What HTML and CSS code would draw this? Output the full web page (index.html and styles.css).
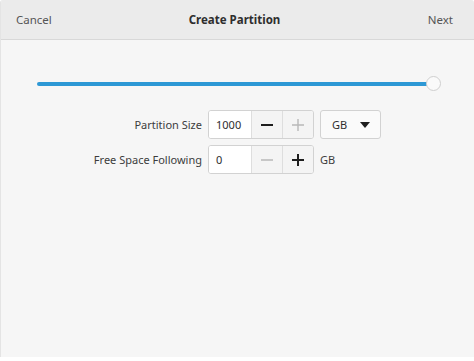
FILE: index.html
```html
<!DOCTYPE html>
<html lang="en">
<head>
    <meta charset="UTF-8">
    <title>Create Partition</title>
    <link rel="stylesheet" href="styles.css">
</head>
<body>
    <div class="window">
        <div class="header">
            <span class="header-btn">Cancel</span>
            <span class="title">Create Partition</span>
            <span class="header-btn next">Next</span>
        </div>

        <div class="content">
            <div class="slider">
                <div class="track"></div>
                <div class="thumb"></div>
            </div>

            <div class="form">
                <label>Partition Size</label>
                <div class="controls">
                    <div class="spin">
                        <div class="spin-value">1000</div>
                        <div class="spin-btn">
                            <svg width="14" height="14" viewBox="0 0 14 14"><path d="M1 7h12" stroke="#1e1e1e" stroke-width="2"/></svg>
                        </div>
                        <div class="spin-btn disabled">
                            <svg width="14" height="14" viewBox="0 0 14 14"><path d="M1 7h12M7 1v12" stroke="#b8b8b8" stroke-width="1.4"/></svg>
                        </div>
                    </div>
                    <div class="combo">
                        <span>GB</span>
                        <svg width="10" height="6" viewBox="0 0 10 6"><path d="M0 0h10L5 6z" fill="#1e1e1e"/></svg>
                    </div>
                </div>

                <label>Free Space Following</label>
                <div class="controls">
                    <div class="spin">
                        <div class="spin-value">0</div>
                        <div class="spin-btn disabled">
                            <svg width="14" height="14" viewBox="0 0 14 14"><path d="M1 7h12" stroke="#b8b8b8" stroke-width="1.4"/></svg>
                        </div>
                        <div class="spin-btn">
                            <svg width="14" height="14" viewBox="0 0 14 14"><path d="M1 7h12M7 1v12" stroke="#1e1e1e" stroke-width="2"/></svg>
                        </div>
                    </div>
                    <span class="unit">GB</span>
                </div>
            </div>
        </div>
    </div>
</body>
</html>
```

FILE: styles.css
```css
html, body {
    margin: 0;
    padding: 0;
    background-color: #ffffff;
}
body {
    font-family: "Noto Sans", "DejaVu Sans", sans-serif;
    font-size: 11px;
    color: #3c3c3c;
}
.window {
    width: 474px;
    height: 357px;
    background-color: #f6f6f6;
    border-left: 1px solid #e4e4e4;
    border-radius: 3px 3px 0 0;
    box-sizing: border-box;
    overflow: hidden;
}
.header {
    height: 40px;
    display: grid;
    grid-template-columns: 1fr auto 1fr;
    align-items: center;
    padding: 0 21px 0 15px;
    background-color: #ebebeb;
    border-bottom: 1px solid #d8d8d8;
    box-sizing: border-box;
    font-size: 11.5px;
}
.header-btn {
    color: #555;
}
.next {
    text-align: right;
}
.title {
    font-weight: bold;
    color: #2e2e2e;
}
.content {
    padding: 36px 0 0 0;
}
.slider {
    position: relative;
    height: 16px;
    margin: 0 34px 0 36px;
}
.track {
    position: absolute;
    left: 0;
    right: 6px;
    top: 6px;
    height: 4px;
    border-radius: 2px;
    background-color: #2d98d5;
}
.thumb {
    position: absolute;
    right: -1px;
    top: 0;
    width: 13px;
    height: 13px;
    border: 1px solid #cfcfcf;
    border-radius: 50%;
    background-color: #fafafa;
}
.form {
    display: grid;
    grid-template-columns: 201px auto;
    column-gap: 6px;
    row-gap: 6px;
    align-items: center;
    margin-top: 18px;
}
label {
    text-align: right;
    color: #3c3c3c;
}
.controls {
    display: flex;
    align-items: center;
    gap: 6px;
}
.spin {
    display: flex;
    height: 29px;
    border: 1px solid #d2d2d2;
    border-radius: 3px;
    background-color: #fbfbfb;
    box-sizing: border-box;
    overflow: hidden;
}
.spin-value {
    width: 42px;
    padding-left: 7px;
    box-sizing: border-box;
    display: flex;
    align-items: center;
    background-color: #ffffff;
    color: #2e2e2e;
}
.spin-btn {
    width: 31px;
    box-sizing: border-box;
    display: flex;
    align-items: center;
    justify-content: center;
    border-left: 1px solid #dedede;
    background-color: #f4f4f4;
}
.combo {
    width: 61px;
    height: 29px;
    display: flex;
    align-items: center;
    justify-content: space-between;
    padding: 0 10px 0 11px;
    border: 1px solid #d2d2d2;
    border-radius: 3px;
    background-color: #fafafa;
    box-sizing: border-box;
    color: #2e2e2e;
}
.unit {
    color: #3c3c3c;
}
```
